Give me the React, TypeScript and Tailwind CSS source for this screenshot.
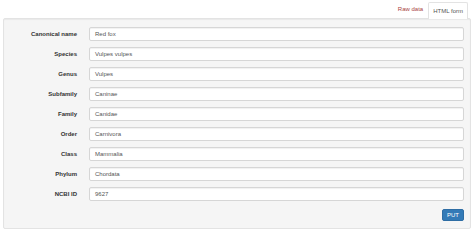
const fields: [string, string][] = [
  ["Canonical name", "Red fox"],
  ["Species", "Vulpes vulpes"],
  ["Genus", "Vulpes"],
  ["Subfamily", "Caninae"],
  ["Family", "Canidae"],
  ["Order", "Carnivora"],
  ["Class", "Mammalia"],
  ["Phylum", "Chordata"],
  ["NCBI ID", "9627"],
];

export default function App() {
  return (
    <div className="h-[232px] w-[474px] overflow-hidden bg-white font-['Liberation_Sans',Arial,sans-serif] text-[6px] text-[#333]">
      <div className="flex h-[18px] items-end justify-end pr-[6px]">
        <a className="flex h-[17px] items-center px-[5px] text-[#a94442]">Raw data</a>
        <div className="-mb-px flex h-[17px] items-center rounded-t-[2px] border border-b-0 border-[#e3e3e3] bg-white px-[4px] text-[#555]">HTML form</div>
      </div>
      <div className="mx-[3px] flex h-[211px] flex-col rounded-[2px] border border-[#e3e3e3] bg-[#f5f5f5] pb-[7px] pr-[6px] pt-[8px] shadow-[inset_0_1px_1px_rgba(0,0,0,0.05)]">
        <div className="flex flex-col gap-[6px]">
          {fields.map(([label, value]) => (
            <div key={label} className="flex items-center gap-[12px]">
              <label className="w-[73px] text-right font-bold">{label}</label>
              <div className="flex h-[14px] flex-1 items-center rounded-[2px] border border-[#d6d6d6] bg-white pl-[5px] text-[#555] shadow-[inset_0_1px_1px_rgba(0,0,0,0.06)]">
                {value}
              </div>
            </div>
          ))}
        </div>
        <div className="mt-[8px] flex justify-end">
          <button className="flex h-[12px] w-[22px] items-center justify-center rounded-[2px] border border-[#2e6da4] bg-[#337ab7] text-[6px] text-white">PUT</button>
        </div>
      </div>
    </div>
  );
}
